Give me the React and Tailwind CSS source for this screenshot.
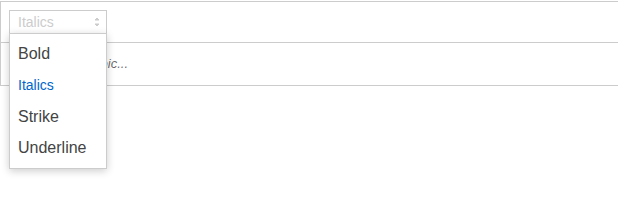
import { useState } from "react"

const options = ["Bold", "Italics", "Strike", "Underline"]

export default function App() {
  const [value, setValue] = useState("Italics")

  return (
    <div className="h-screen w-full overflow-hidden bg-white pt-px font-['Liberation_Sans',Arial,sans-serif]">
      <div className="w-[640px]">
        {/* Toolbar */}
        <div className="flex border border-[#ccc] p-2">
          <span className="relative block h-6 w-[98px] text-sm text-[#ccc]">
            <span className="relative flex h-full items-center border border-[#ccc] pl-2 pr-0.5">
              {value}
              <svg viewBox="0 0 18 18" className="absolute right-0 top-1/2 -mt-[9px] h-[18px] w-[18px]">
                <polygon points="7 11 9 13 11 11 7 11" fill="#ccc" stroke="#ccc" strokeLinejoin="round" />
                <polygon points="7 7 9 5 11 7 7 7" fill="#ccc" stroke="#ccc" strokeLinejoin="round" />
              </svg>
            </span>

            {/* Options */}
            <span className="absolute left-0 top-full z-10 -mt-px block w-full border border-[#ccc] bg-white px-2 py-1 shadow-[0_2px_8px_rgba(0,0,0,0.2)]">
              {options.map((opt) => (
                <span
                  key={opt}
                  onClick={() => setValue(opt)}
                  className={
                    opt === value
                      ? "flex h-[31.5px] cursor-pointer items-center text-sm text-[#06c]"
                      : "flex h-[31.5px] cursor-pointer items-center text-base text-[#444]"
                  }
                >
                  {opt}
                </span>
              ))}
            </span>
          </span>
        </div>

        {/* Editor */}
        <div className="border border-t-0 border-[#ccc]">
          <div className="px-[15px] py-3 text-[13px] leading-[1.42] italic text-black/60">
            Compose an epic...
          </div>
        </div>
      </div>
    </div>
  )
}
